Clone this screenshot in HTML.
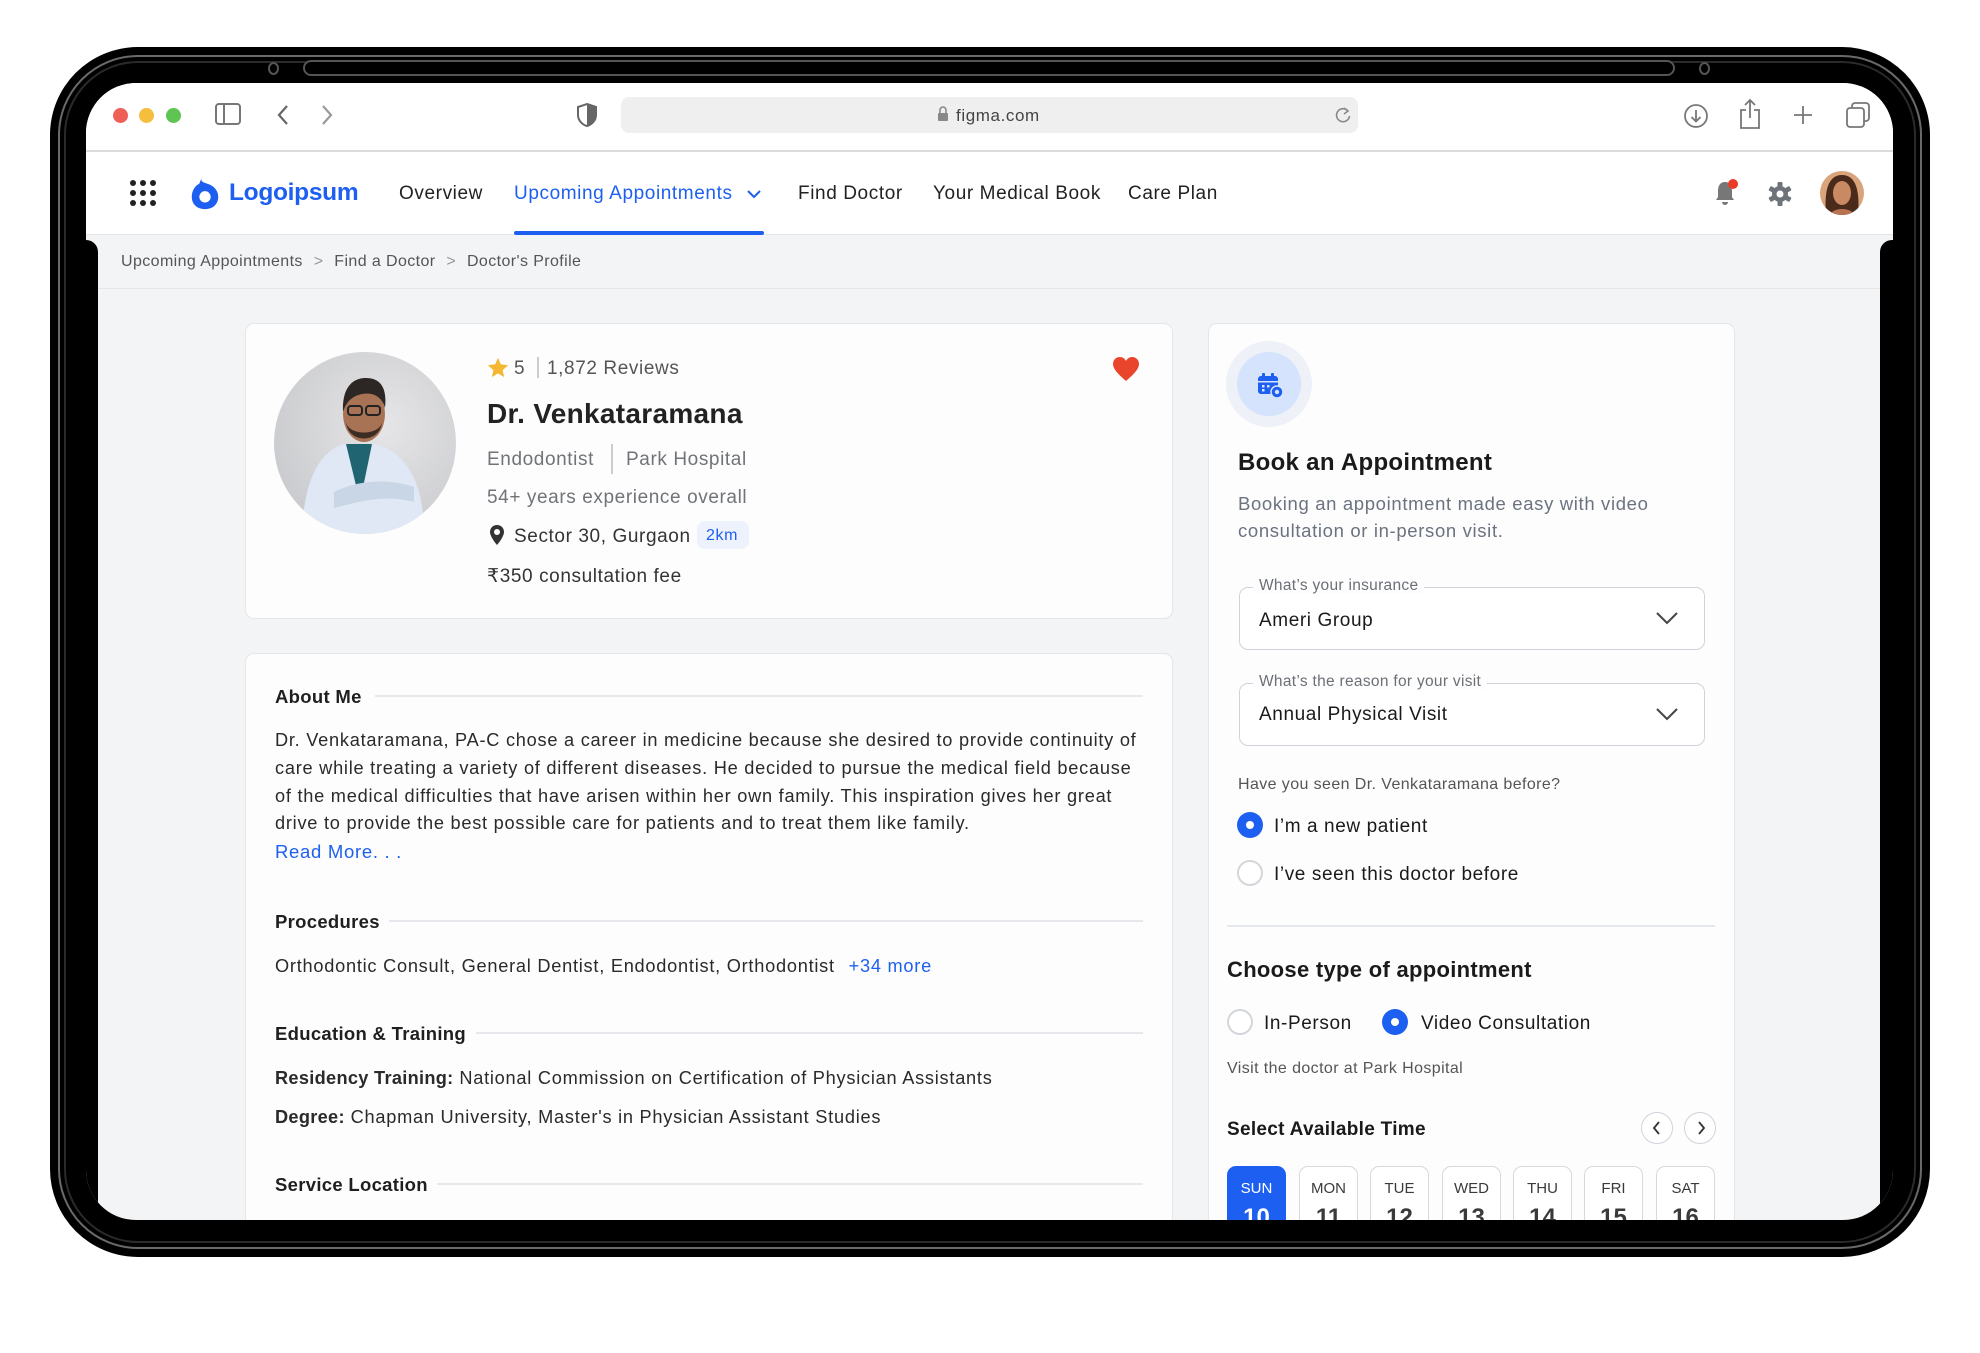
<!DOCTYPE html>
<html><head><meta charset="utf-8">
<style>
*{margin:0;padding:0;box-sizing:border-box}
html,body{width:1980px;height:1290px;overflow:hidden;background:#fff;font-family:"Liberation Sans",sans-serif;letter-spacing:0.6px}
.abs{position:absolute}
.t{position:absolute;white-space:nowrap;line-height:1}
#dev{position:absolute;left:50px;top:47px;width:1880px;height:1210px;background:#000;border-radius:88px}
#rim{position:absolute;left:8px;top:8px;right:8px;bottom:8px;border:2px solid #6a6a6a;border-radius:80px}
#rim2{position:absolute;left:14px;top:14px;right:14px;bottom:14px;border:2px solid #2a2a2a;border-radius:74px}
#scr{position:absolute;left:0;top:0;width:1980px;height:1290px;clip-path:inset(83px 87px 70px 86px round 50px);background:#f3f4f6}
.card{position:absolute;background:#fdfdfd;border:1.5px solid #e4e6ea;border-radius:9px}
.sec{font-weight:bold;font-size:18.5px;color:#1f1f1f;letter-spacing:0.3px}
.hl{position:absolute;height:2px;background:#e6e8ee}
.p{font-size:18.2px;color:#2a2a2a;letter-spacing:0.75px}
.g{color:#6b6f76}
.blue{color:#1d5ff0}
.sel{position:absolute;left:1239px;width:466px;height:63px;border:1.5px solid #cfd3d9;border-radius:9px;background:#fff}
.lbl{background:#fdfdfd;padding:0 6px;font-size:15.5px;color:#6b6f76;letter-spacing:0.3px}
.rad{position:absolute;width:26px;height:26px;border-radius:50%;border:2px solid #d3d6db;background:#fff}
.rad.on{border:none;background:#1d5ff0}
.rad.on::after{content:"";position:absolute;left:9px;top:9px;width:8px;height:8px;border-radius:50%;background:#fff}
.day{position:absolute;top:1166px;width:59px;height:70px;border:1.5px solid #d6d9de;border-radius:9px;background:#fff;text-align:center;color:#3a3a3a;letter-spacing:0}
.day .d{position:absolute;left:0;right:0;top:13px;font-size:15px}
.day .n{position:absolute;left:0;right:0;top:37px;font-size:24px;font-weight:bold}
</style></head><body>

<div id="dev"><div id="rim"></div><div id="rim2"></div></div>
<div class="abs" style="left:303px;top:60px;width:1372px;height:16px;border-radius:8px;background:#000;border:2px solid #555"></div>
<div class="abs" style="left:268px;top:62px;width:11px;height:13px;border-radius:50%;border:2px solid #555;background:#000"></div>
<div class="abs" style="left:1699px;top:62px;width:11px;height:13px;border-radius:50%;border:2px solid #555;background:#000"></div>

<div id="scr">
  <div class="abs" style="left:0;top:0;width:1980px;height:235px;background:#fff"></div>
  <div class="abs" style="left:0;top:150px;width:1980px;height:2px;background:#dcdcdc"></div>
  <div class="abs" style="left:113px;top:108px;width:15px;height:15px;border-radius:50%;background:#ee5f57"></div>
  <div class="abs" style="left:139px;top:108px;width:15px;height:15px;border-radius:50%;background:#f5be3c"></div>
  <div class="abs" style="left:166px;top:108px;width:15px;height:15px;border-radius:50%;background:#5fc451"></div>
  <svg class="abs" style="left:214px;top:102px" width="28" height="24" viewBox="0 0 28 24"><rect x="2" y="2" width="24" height="20" rx="3" fill="none" stroke="#777" stroke-width="2"/><line x1="10" y1="2" x2="10" y2="22" stroke="#777" stroke-width="2"/></svg>
  <svg class="abs" style="left:276px;top:104px" width="16" height="22"><path d="M11 2 L3 11 L11 20" fill="none" stroke="#666" stroke-width="2.2"/></svg>
  <svg class="abs" style="left:319px;top:104px" width="16" height="22"><path d="M4 2 L12 11 L4 20" fill="none" stroke="#999" stroke-width="2.2"/></svg>
  <svg class="abs" style="left:576px;top:102px" width="22" height="26"><path d="M11 2 L20 5 L20 13 C20 19 15 23 11 24 C7 23 2 19 2 13 L2 5 Z" fill="none" stroke="#666" stroke-width="2"/><path d="M11 2 L20 5 L20 13 C20 19 15 23 11 24 Z" fill="#666"/></svg>
  <div class="abs" style="left:621px;top:97px;width:737px;height:36px;border-radius:8px;background:#efefef"></div>
  <svg class="abs" style="left:937px;top:106px" width="12" height="16"><rect x="1" y="7" width="10" height="8" rx="1" fill="#888"/><path d="M3 7 V4 a3 3 0 0 1 6 0 V7" fill="none" stroke="#888" stroke-width="1.6"/></svg>
  <div class="t" style="left:956px;top:107px;font-size:17px;color:#444">figma.com</div>
  <svg class="abs" style="left:1334px;top:106px" width="18" height="18"><path d="M14 5 A6.5 6.5 0 1 0 15.5 10" fill="none" stroke="#888" stroke-width="1.6"/><path d="M10 2 L14 5 L10 8" fill="none" stroke="#888" stroke-width="1.6"/></svg>
  <svg class="abs" style="left:1683px;top:103px" width="26" height="26"><circle cx="13" cy="13" r="11" fill="none" stroke="#777" stroke-width="1.8"/><path d="M13 7 V18 M8.5 14 L13 18.5 L17.5 14" fill="none" stroke="#777" stroke-width="1.8"/></svg>
  <svg class="abs" style="left:1738px;top:98px" width="24" height="32"><path d="M8 12 H3 V30 H21 V12 H16" fill="none" stroke="#777" stroke-width="1.8"/><path d="M12 2 V20 M7 7 L12 2 L17 7" fill="none" stroke="#777" stroke-width="1.8"/></svg>
  <svg class="abs" style="left:1792px;top:104px" width="22" height="22"><path d="M11 2 V20 M2 11 H20" stroke="#777" stroke-width="1.8"/></svg>
  <svg class="abs" style="left:1845px;top:101px" width="26" height="28"><rect x="7" y="2" width="17" height="18" rx="3" fill="none" stroke="#777" stroke-width="1.8"/><rect x="2" y="7" width="17" height="19" rx="3" fill="#fff" stroke="#777" stroke-width="1.8"/></svg>

  <div class="abs" style="left:0;top:234px;width:1980px;height:1px;background:#e5e5e5"></div>
  <svg class="abs" style="left:130px;top:180px" width="26" height="26"><g fill="#222"><circle cx="3" cy="3" r="3"/><circle cx="13" cy="3" r="3"/><circle cx="23" cy="3" r="3"/><circle cx="3" cy="13" r="3"/><circle cx="13" cy="13" r="3"/><circle cx="23" cy="13" r="3"/><circle cx="3" cy="23" r="3"/><circle cx="13" cy="23" r="3"/><circle cx="23" cy="23" r="3"/></g></svg>
  <svg class="abs" style="left:189px;top:177px" width="32" height="34" viewBox="0 0 32 36"><path d="M12 2 C12 6 16 6 18 7 C26 9 30 15 30 21 C30 29 24 34 16 34 C8 34 2 29 2 21 C2 14 6 9 10 7 Z" fill="#1d5ff0"/><circle cx="16" cy="21" r="6" fill="#fff"/></svg>
  <div class="t" style="left:229px;top:181px;font-size:24.5px;font-weight:bold;color:#1d5ff0;letter-spacing:-0.3px">Logoipsum</div>
  <div class="t" style="left:399px;top:184px;font-size:19px;color:#222">Overview</div>
  <div class="t" style="left:514px;top:184px;font-size:19px;color:#1d5ff0">Upcoming Appointments</div>
  <svg class="abs" style="left:746px;top:189px" width="16" height="10"><path d="M2 2 L8 8 L14 2" fill="none" stroke="#1d5ff0" stroke-width="2"/></svg>
  <div class="abs" style="left:514px;top:231px;width:250px;height:4px;background:#1d5ff0;border-radius:2px"></div>
  <div class="t" style="left:798px;top:184px;font-size:19px;color:#222">Find Doctor</div>
  <div class="t" style="left:933px;top:184px;font-size:19px;color:#222">Your Medical Book</div>
  <div class="t" style="left:1128px;top:184px;font-size:19px;color:#222">Care Plan</div>
  <svg class="abs" style="left:1714px;top:178px" width="26" height="30"><path d="M11 4 C6 4 4 8 4 13 V19 L2 22 H20 L18 19 V13 C18 8 16 4 11 4 Z" fill="#777"/><path d="M8 24 a3 3 0 0 0 6 0" fill="#777"/><circle cx="19" cy="6" r="5" fill="#ea3b25"/></svg>
  <svg class="abs" style="left:1767px;top:181px" width="26" height="26" viewBox="0 0 26 26"><g fill="#6e7279"><circle cx="13" cy="13" r="8"/><rect x="10.5" y="1" width="5" height="24" rx="1"/><rect x="10.5" y="1" width="5" height="24" rx="1" transform="rotate(60 13 13)"/><rect x="10.5" y="1" width="5" height="24" rx="1" transform="rotate(120 13 13)"/></g><circle cx="13" cy="13" r="3.5" fill="#fff"/></svg>
  <svg class="abs" style="left:1820px;top:171px" width="44" height="44"><defs><clipPath id="av"><circle cx="22" cy="22" r="22"/></clipPath></defs><g clip-path="url(#av)"><rect width="44" height="44" fill="#d9a47c"/><path d="M6 44 C4 20 8 4 22 4 C36 4 40 20 38 44 Z" fill="#4a2a1a"/><ellipse cx="22" cy="22" rx="9" ry="12" fill="#c98a63"/><path d="M10 44 C12 36 32 36 34 44 Z" fill="#b87352"/></g></svg>

  <div class="t" style="left:121px;top:254px;font-size:16px;color:#555;letter-spacing:0.4px">Upcoming Appointments <span style="color:#999;padding:0 6px">&gt;</span> Find a Doctor <span style="color:#999;padding:0 6px">&gt;</span> Doctor's Profile</div>
  <div class="abs" style="left:0;top:288px;width:1980px;height:1px;background:#e6e6e6"></div>

  <div class="abs" style="left:86px;top:240px;width:12px;height:1000px;background:#000;border-top-right-radius:12px"></div>
  <div class="abs" style="left:1880px;top:240px;width:14px;height:1000px;background:#000;border-top-left-radius:12px"></div>

  <div class="card" style="left:245px;top:323px;width:928px;height:296px"></div>
  <svg class="abs" style="left:274px;top:352px" width="182" height="182" viewBox="0 0 182 182"><defs><clipPath id="ph"><circle cx="91" cy="91" r="91"/></clipPath><radialGradient id="bg" cx="0.6" cy="0.4" r="0.7"><stop offset="0" stop-color="#e6e6e8"/><stop offset="1" stop-color="#c8c9cc"/></radialGradient></defs><g clip-path="url(#ph)"><rect width="182" height="182" fill="url(#bg)"/><path d="M28 182 C30 120 50 98 70 92 L100 92 C125 98 150 120 150 182 Z" fill="#dfe8f4"/><path d="M72 92 L86 150 L98 92 Z" fill="#1f6470"/><path d="M60 140 C80 130 110 125 140 135 L140 150 C110 142 85 150 60 156 Z" fill="#c9d6e6"/><ellipse cx="90" cy="62" rx="21" ry="28" fill="#a77354"/><path d="M69 60 C68 36 78 26 92 26 C108 26 113 38 111 56 C108 44 98 40 88 42 C78 44 72 50 69 60 Z" fill="#2c2624"/><path d="M72 70 C74 92 106 92 108 70 C106 84 74 84 72 70 Z" fill="#3b2c24"/><rect x="74" y="54" width="14" height="9" rx="3" fill="none" stroke="#222" stroke-width="2"/><rect x="92" y="54" width="14" height="9" rx="3" fill="none" stroke="#222" stroke-width="2"/></g></svg>
  <svg class="abs" style="left:487px;top:357px" width="22" height="21" viewBox="0 0 24 23"><path d="M12 1 L15 8 L23 9 L17 14.5 L18.8 22 L12 18 L5.2 22 L7 14.5 L1 9 L9 8 Z" fill="#f5b731"/></svg>
  <div class="t" style="left:514px;top:359px;font-size:19px;color:#555">5</div>
  <div class="abs" style="left:537px;top:357px;width:1.5px;height:21px;background:#ccc"></div>
  <div class="t" style="left:547px;top:359px;font-size:19px;color:#555">1,872 Reviews</div>
  <svg class="abs" style="left:1112px;top:356px" width="28" height="26" viewBox="0 0 28 26"><path d="M14 25 C6 18 1 13 1 8 C1 4 4 1 8 1 C11 1 13 3 14 5 C15 3 17 1 20 1 C24 1 27 4 27 8 C27 13 22 18 14 25 Z" fill="#e8452c"/></svg>
  <div class="t" style="left:487px;top:400px;font-size:28px;font-weight:bold;color:#222;letter-spacing:0.3px">Dr. Venkataramana</div>
  <div class="t" style="left:487px;top:450px;font-size:19px;color:#707378">Endodontist</div>
  <div class="abs" style="left:611px;top:444px;width:1.5px;height:30px;background:#ccc"></div>
  <div class="t" style="left:626px;top:450px;font-size:19px;color:#707378">Park Hospital</div>
  <div class="t" style="left:487px;top:488px;font-size:19px;color:#707378">54+ years experience overall</div>
  <svg class="abs" style="left:489px;top:524px" width="16" height="22" viewBox="0 0 16 22"><path d="M8 1 C4 1 1 4 1 8 C1 13 8 21 8 21 C8 21 15 13 15 8 C15 4 12 1 8 1 Z" fill="#333"/><circle cx="8" cy="8" r="3" fill="#fff"/></svg>
  <div class="t" style="left:514px;top:527px;font-size:19px;color:#333">Sector 30, Gurgaon</div>
  <div class="abs" style="left:697px;top:521px;width:52px;height:28px;border-radius:8px;background:#eef2fc"></div>
  <div class="t" style="left:706px;top:528px;font-size:16px;color:#1d5ff0">2km</div>
  <div class="t" style="left:487px;top:567px;font-size:19px;color:#333">₹350 consultation fee</div>

  <div class="card" style="left:245px;top:653px;width:928px;height:700px"></div>
  <div class="t sec" style="left:275px;top:688px">About Me</div>
  <div class="hl" style="left:375px;top:695px;width:768px"></div>
  <div class="abs p" style="left:275px;top:727px;line-height:27.8px;white-space:nowrap">Dr. Venkataramana, PA-C chose a career in medicine because she desired to provide continuity of<br>care while treating a variety of different diseases. He decided to pursue the medical field because<br>of the medical difficulties that have arisen within her own family. This inspiration gives her great<br>drive to provide the best possible care for patients and to treat them like family.</div>
  <div class="t blue" style="left:275px;top:843px;font-size:18.5px;letter-spacing:0.7px">Read More. . .</div>
  <div class="t sec" style="left:275px;top:913px">Procedures</div>
  <div class="hl" style="left:389px;top:920px;width:754px"></div>
  <div class="t p" style="left:275px;top:957px">Orthodontic Consult, General Dentist, Endodontist, Orthodontist <span class="blue" style="padding-left:8px">+34 more</span></div>
  <div class="t sec" style="left:275px;top:1025px">Education &amp; Training</div>
  <div class="hl" style="left:476px;top:1032px;width:667px"></div>
  <div class="t p" style="left:275px;top:1069px"><b style="letter-spacing:0.3px">Residency Training:</b> National Commission on Certification of Physician Assistants</div>
  <div class="t p" style="left:275px;top:1108px"><b style="letter-spacing:0.3px">Degree:</b> Chapman University, Master's in Physician Assistant Studies</div>
  <div class="t sec" style="left:275px;top:1176px">Service Location</div>
  <div class="hl" style="left:437px;top:1183px;width:706px"></div>

  <div class="card" style="left:1208px;top:323px;width:527px;height:1000px"></div>
  <div class="abs" style="left:1226px;top:341px;width:86px;height:86px;border-radius:50%;background:#eef1f8"></div>
  <div class="abs" style="left:1237px;top:352px;width:64px;height:64px;border-radius:50%;background:#d5e3fd"></div>
  <svg class="abs" style="left:1256px;top:371px" width="28" height="28" viewBox="0 0 28 28"><rect x="2" y="5" width="20" height="18" rx="3" fill="#1d5ff0"/><rect x="6" y="2" width="3" height="6" rx="1" fill="#1d5ff0"/><rect x="15" y="2" width="3" height="6" rx="1" fill="#1d5ff0"/><rect x="2" y="10" width="20" height="1.5" fill="#d5e3fd"/><rect x="6" y="14" width="2.5" height="2.5" fill="#d5e3fd"/><rect x="11" y="14" width="2.5" height="2.5" fill="#d5e3fd"/><rect x="6" y="18" width="2.5" height="2.5" fill="#d5e3fd"/><circle cx="21" cy="21" r="6" fill="#1d5ff0" stroke="#d5e3fd" stroke-width="1.5"/><circle cx="21" cy="21" r="2.2" fill="#d5e3fd"/></svg>
  <div class="t" style="left:1238px;top:451px;font-size:24px;font-weight:bold;color:#1a1a1a;letter-spacing:0.3px">Book an Appointment</div>
  <div class="abs" style="left:1238px;top:491px;font-size:18.5px;line-height:26.5px;color:#6b7280;white-space:nowrap;letter-spacing:0.65px">Booking an appointment made easy with video<br>consultation or in-person visit.</div>

  <div class="sel" style="top:587px"></div>
  <div class="t lbl" style="left:1253px;top:578px">What’s your insurance</div>
  <div class="t" style="left:1259px;top:611px;font-size:19px;color:#1a1a1a">Ameri Group</div>
  <svg class="abs" style="left:1655px;top:611px" width="24" height="14"><path d="M2 2 L12 12 L22 2" fill="none" stroke="#444" stroke-width="2"/></svg>

  <div class="sel" style="top:683px"></div>
  <div class="t lbl" style="left:1253px;top:674px">What’s the reason for your visit</div>
  <div class="t" style="left:1259px;top:705px;font-size:19px;color:#1a1a1a">Annual Physical Visit</div>
  <svg class="abs" style="left:1655px;top:707px" width="24" height="14"><path d="M2 2 L12 12 L22 2" fill="none" stroke="#444" stroke-width="2"/></svg>

  <div class="t" style="left:1238px;top:777px;font-size:16px;color:#555;letter-spacing:0.4px">Have you seen Dr. Venkataramana before?</div>
  <div class="rad on" style="left:1237px;top:812px"></div>
  <div class="t" style="left:1274px;top:817px;font-size:19px;color:#1a1a1a">I’m a new patient</div>
  <div class="rad" style="left:1237px;top:860px"></div>
  <div class="t" style="left:1274px;top:865px;font-size:19px;color:#1a1a1a">I’ve seen this doctor before</div>
  <div class="abs" style="left:1227px;top:925px;width:488px;height:2px;background:#e6e8f0"></div>
  <div class="t" style="left:1227px;top:959px;font-size:22px;font-weight:bold;color:#1a1a1a;letter-spacing:0.3px">Choose type of appointment</div>
  <div class="rad" style="left:1227px;top:1009px"></div>
  <div class="t" style="left:1264px;top:1014px;font-size:19px;color:#1a1a1a">In-Person</div>
  <div class="rad on" style="left:1382px;top:1009px"></div>
  <div class="t" style="left:1421px;top:1014px;font-size:19px;color:#1a1a1a">Video Consultation</div>
  <div class="t" style="left:1227px;top:1061px;font-size:16px;color:#555;letter-spacing:0.4px">Visit the doctor at Park Hospital</div>
  <div class="t" style="left:1227px;top:1120px;font-size:19px;font-weight:bold;color:#1a1a1a;letter-spacing:0.3px">Select Available Time</div>
  <div class="abs" style="left:1641px;top:1112px;width:32px;height:32px;border-radius:50%;border:1.5px solid #cfd3d9;background:#fff"></div>
  <svg class="abs" style="left:1651px;top:1120px" width="12" height="16"><path d="M8 2 L3 8 L8 14" fill="none" stroke="#333" stroke-width="1.8"/></svg>
  <div class="abs" style="left:1684px;top:1112px;width:32px;height:32px;border-radius:50%;border:1.5px solid #cfd3d9;background:#fff"></div>
  <svg class="abs" style="left:1695px;top:1120px" width="12" height="16"><path d="M4 2 L9 8 L4 14" fill="none" stroke="#333" stroke-width="1.8"/></svg>

  <div class="day" style="left:1227px;background:#1d5ff0;border-color:#1d5ff0;color:#fff"><div class="d">SUN</div><div class="n">10</div></div>
  <div class="day" style="left:1299px"><div class="d">MON</div><div class="n">11</div></div>
  <div class="day" style="left:1370px"><div class="d">TUE</div><div class="n">12</div></div>
  <div class="day" style="left:1442px"><div class="d">WED</div><div class="n">13</div></div>
  <div class="day" style="left:1513px"><div class="d">THU</div><div class="n">14</div></div>
  <div class="day" style="left:1584px"><div class="d">FRI</div><div class="n">15</div></div>
  <div class="day" style="left:1656px"><div class="d">SAT</div><div class="n">16</div></div>
</div>
</body></html>
